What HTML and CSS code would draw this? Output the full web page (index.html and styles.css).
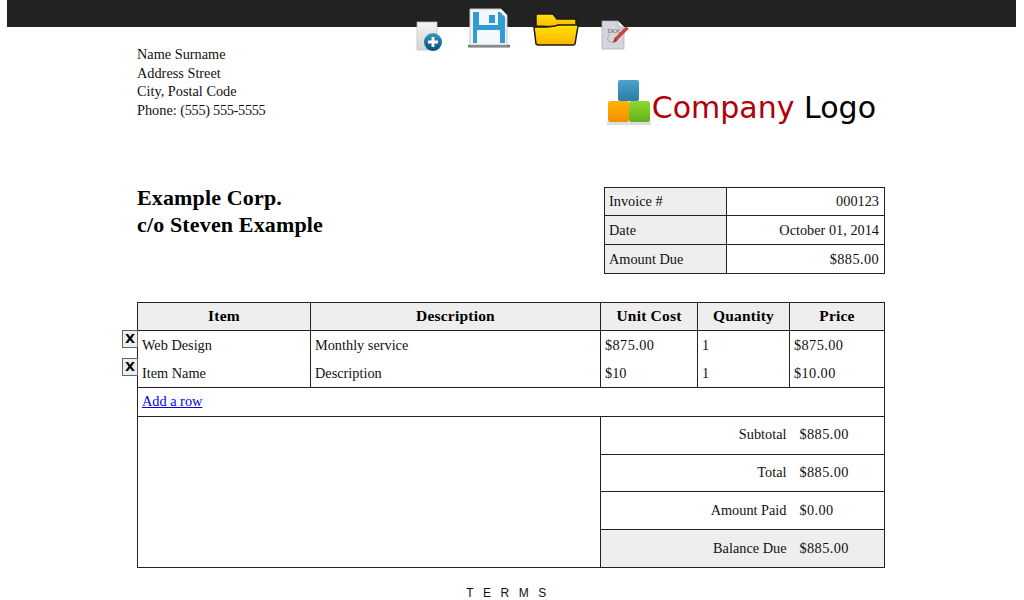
FILE: index.html
```html
<!DOCTYPE html>
<html lang="en">
<head>
<meta charset="utf-8">
<title>Invoice</title>
<link rel="stylesheet" href="styles.css">
</head>
<body>
<header class="bar">
  <div class="tools">
    <svg class="tool tool-new" width="28" height="32" viewBox="0 0 28 32">
      <defs><linearGradient id="pg" x1="0" y1="0" x2="0" y2="1"><stop offset="0" stop-color="#f4f4f4"/><stop offset="1" stop-color="#d4d4d4"/></linearGradient>
      <linearGradient id="bl" x1="0" y1="0" x2="0" y2="1"><stop offset="0" stop-color="#3a9ac4"/><stop offset="1" stop-color="#064a78"/></linearGradient></defs>
      <rect x="1" y="1" width="20" height="28" fill="url(#pg)" stroke="#bbb" stroke-width=".7"/>
      <circle cx="17" cy="21" r="9" fill="url(#bl)"/>
      <path d="M17 16v10M12 21h10" stroke="#fff" stroke-width="2.800"/>
    </svg>
    <svg class="tool tool-save" width="44" height="42" viewBox="0 0 44 42">
      <defs><linearGradient id="sh" x1="0" y1="0" x2="0" y2="1"><stop offset="0" stop-color="#444"/><stop offset="1" stop-color="#ccc"/></linearGradient></defs>
      <rect x="0" y="37" width="42" height="3" fill="url(#sh)"/>
      <path d="M2 1h31l6 6v30H2z" fill="#f6f6f6" stroke="#c4c4c4"/>
      <path d="M5 4h27l5 5v26H5z" fill="#2f9bd8"/>
      <rect x="11" y="4" width="19" height="13" fill="#f4f8fb"/>
      <rect x="21" y="7" width="6" height="8" fill="#2f9bd8"/>
      <rect x="9" y="22" width="23" height="13" fill="#f4f8fb"/>
    </svg>
    <svg class="tool tool-open" width="46" height="35" viewBox="0 0 46 35">
      <defs><linearGradient id="fo" x1="0" y1="0" x2="0" y2="1"><stop offset="0" stop-color="#ffe400"/><stop offset="1" stop-color="#fdb300"/></linearGradient></defs>
      <path d="M3 14V3q0-1 1-1h16l4 5h18q1 0 1 1v8z" fill="url(#fo)" stroke="#1a1a1a" stroke-width="1.500"/>
      <path d="M1 15q7 0 13 0l8-1 3-1h19q1 0 1 1l-3 18q0 1-2 1H6q-2 0-3-1z" fill="url(#fo)" stroke="#1a1a1a" stroke-width="1.500"/>
    </svg>
    <svg class="tool tool-edit" width="28" height="30" viewBox="0 0 28 30">
      <path d="M1 1h16l6 6v22H1z" fill="#d3d6dc" stroke="#aaa" stroke-width=".7"/>
      <path d="M17 1v6h6" fill="#f0f0f0" stroke="#aaa" stroke-width=".7"/>
      <text class="doc" x="6.500" y="13">DOC</text>
      <path d="M9 14q-5 6 0 8q5 1 8-3" fill="none" stroke="#999" stroke-width=".7"/>
      <path d="M14 20 26.500 7.500" stroke="#c9463f" stroke-width="3.500"/>
      <path d="M14 18.500l2 2.500-4.500 2z" fill="#8f2f2a"/>
    </svg>
  </div>
</header>

<main class="page">
  <section class="top">
    <address class="sender">Name Surname<br>Address Street<br>City, Postal Code<br>Phone: <span class="phone">(555) 555-5555</span></address>
    <div class="logo">
      <svg class="logo-mark" width="46" height="48" viewBox="0 0 46 48">
        <defs>
          <linearGradient id="lb" x1="0" y1="0" x2="0" y2="1"><stop offset="0" stop-color="#4ba3cc"/><stop offset="1" stop-color="#2d7ca8"/></linearGradient>
          <linearGradient id="lo" x1="0" y1="0" x2="0" y2="1"><stop offset="0" stop-color="#ffb400"/><stop offset="1" stop-color="#f09000"/></linearGradient>
          <linearGradient id="lg" x1="0" y1="0" x2="0" y2="1"><stop offset="0" stop-color="#92d82e"/><stop offset="1" stop-color="#62b01e"/></linearGradient>
        </defs>
        <rect x="0" y="44" width="44" height="3" fill="#ddd"/>
        <rect x="11" y="2" width="21" height="21" rx="2" fill="url(#lb)"/>
        <rect x="1" y="23" width="21" height="21" rx="2" fill="url(#lo)"/>
        <rect x="22" y="23" width="21" height="21" rx="2" fill="url(#lg)"/>
      </svg>
      <span class="logo-text"><span class="logo-red">Company</span> Logo</span>
    </div>
  </section>

  <section class="meta-row">
    <h1 class="customer">Example Corp.<br>c/o Steven Example</h1>
    <table class="meta">
      <tr class="meta-first"><th>Invoice #</th><td>000123</td></tr>
      <tr><th>Date</th><td>October 01, 2014</td></tr>
      <tr><th>Amount Due</th><td class="money">$885.00</td></tr>
    </table>
  </section>

  <table class="items">
    <colgroup><col class="c1"><col class="c2"><col class="c3"><col class="c4"><col class="c5"></colgroup>
    <thead>
      <tr><th>Item</th><th>Description</th><th>Unit Cost</th><th>Quantity</th><th>Price</th></tr>
    </thead>
    <tbody>
      <tr class="item"><td class="first"><button class="del">X</button>Web Design</td><td>Monthly service</td><td class="money">$875.00</td><td>1</td><td class="money">$875.00</td></tr>
      <tr class="item"><td class="first"><button class="del">X</button>Item Name</td><td>Description</td><td>$10</td><td>1</td><td class="money">$10.00</td></tr>
      <tr class="add"><td colspan="5"><a href="#">Add a row</a></td></tr>
      <tr class="sum sum-top"><td colspan="2" rowspan="4" class="blank"></td><td colspan="2" class="lbl">Subtotal</td><td class="val money">$885.00</td></tr>
      <tr class="sum sum-short"><td colspan="2" class="lbl">Total</td><td class="val money">$885.00</td></tr>
      <tr class="sum"><td colspan="2" class="lbl">Amount Paid</td><td class="val money">$0.00</td></tr>
      <tr class="sum due"><td colspan="2" class="lbl">Balance Due</td><td class="val money">$885.00</td></tr>
    </tbody>
  </table>

  <h2 class="terms">TERMS</h2>
</main>
</body>
</html>
```

FILE: styles.css
```css
html, body { margin: 0; padding: 0; background: #fff; }
body {
  height: 600px;
  overflow: hidden;
  font-family: "Liberation Serif", Georgia, serif;
  font-size: 14.3px;
  color: #111;
}
.bar {
  height: 27px;
  margin: 0 8px 0 7px;
  background: #222;
}
.tools {
  display: flex;
  align-items: flex-start;
  padding-left: 409px;
}
.tool { flex: none; overflow: visible; }
.tool-new { margin-top: 21px; }
.tool-save { margin: 8px 0 0 24px; }
.tool-open { margin: 12px 0 0 21px; }
.tool-edit { margin: 20px 0 0 22px; }
.doc { font: 7px "Liberation Serif", serif; fill: #666; }

.page { width: 748px; margin-left: 137px; }
.top { display: flex; justify-content: space-between; height: 160px; }
.sender {
  font-style: normal;
  line-height: 18.500px;
  padding-top: 18px;
}
.phone { letter-spacing: -.3px; }
.logo { display: flex; align-items: flex-start; padding: 49px 9px 0 0; }
.logo-mark { margin-top: 2px; margin-left: -1px; }
.logo-text {
  font-family: "DejaVu Sans", sans-serif;
  font-size: 30px;
  line-height: 44px;
  color: #000;
  margin: 10px 0 0 -1px;
}
.logo-red { color: #b00008; }

.meta-row { display: flex; justify-content: space-between; height: 115px; }
.customer {
  margin: -2px 0 0;
  font-size: 22px;
  line-height: 26.500px;
  font-weight: bold;
  letter-spacing: .15px;
  color: #000;
}
table { border-collapse: collapse; }
.meta { width: 281px; height: 85px; table-layout: fixed; }
.meta th, .meta td {
  border: 1px solid #222;
  padding: 0 5px;
  font-weight: normal;
  height: 28px;
}
.meta-first th, .meta-first td { height: 27px; }
.meta th { width: 112px; text-align: left; background: #eee; padding-left: 4px; }
.meta td { text-align: right; }
.money { letter-spacing: .4px; }

.items { width: 748px; table-layout: fixed; }
.c1 { width: 173px; }
.c2 { width: 290px; }
.c3 { width: 97px; }
.c4 { width: 92px; }
.c5 { width: 95px; }
.items th, .items td { border: 1px solid #222; padding: 0 4px; }
.items th {
  height: 25px;
  padding-bottom: 2px;
  background: #eee;
  font-size: 15.500px;
  letter-spacing: .2px;
  font-weight: bold;
  text-align: center;
  color: #000;
}
.item td { height: 28px; border-top: none; border-bottom: none; vertical-align: middle; }
.first { position: relative; }
.del {
  position: absolute;
  left: -16px;
  top: -1px;
  width: 16px;
  height: 18px;
  padding: 0;
  box-sizing: border-box;
  border: 1px solid #666;
  background: #eee;
  font: bold 13px/14px "DejaVu Sans", sans-serif;
  color: #000;
}
.add td { height: 26px; padding-bottom: 2px; border-top: 1px solid #222; }
.add a { color: #00e; }
.sum td { height: 37px; }
.sum-short .lbl, .sum-short .val { height: 34px; padding-bottom: 2px; }
.sum-top .lbl, .sum-top .val { height: 35px; padding-bottom: 2px; }
.items td.lbl { text-align: right; border-right: none; padding-right: 3px; }
.items td.val { border-left: none; padding-left: 10px; }
.due td.lbl, .due td.val { background: #eee; }
.terms {
  margin: 17px 0 0;
  text-align: center;
  font: 12px/16px "Liberation Sans", sans-serif;
  letter-spacing: 9.500px;
  color: #111;
}
```
